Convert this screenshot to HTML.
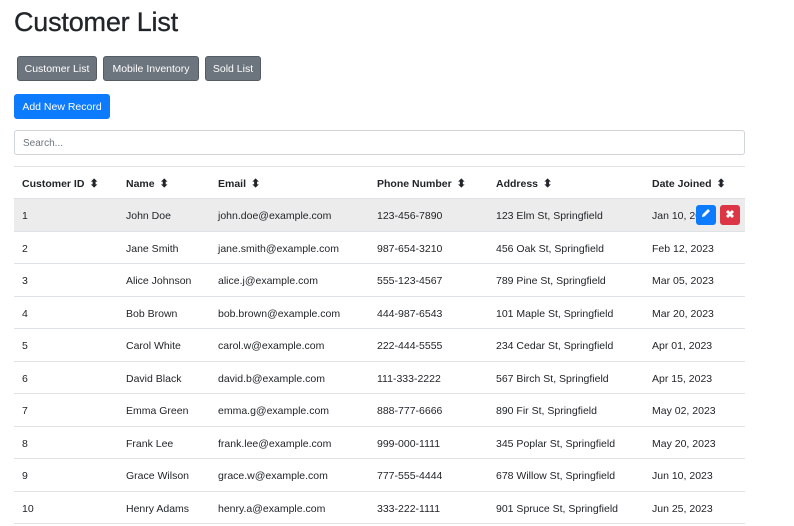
<!DOCTYPE html>
<html><head><style>
*{box-sizing:border-box;margin:0;padding:0}
body{width:794px;height:520px;overflow:hidden;background:#fff;font-family:"Liberation Sans",sans-serif;color:#212529;position:relative}
h1{position:absolute;left:14px;top:7px;font-size:27px;font-weight:500;letter-spacing:-0.2px;-webkit-text-stroke:0.3px #212529}
.b{position:absolute;background:#6c757d;color:#fff;font-size:10.5px;border:1px solid #555c63;border-radius:3px;text-align:center;line-height:25px;height:25px}
.add{position:absolute;left:14px;top:94px;width:96px;height:25px;background:#0d7bfd;color:#fff;font-size:10.5px;border-radius:3px;text-align:center;line-height:27px}
.s{position:absolute;left:14px;top:130px;width:731px;height:25px;border:1px solid #ced4da;border-radius:3px;font-size:10px;color:#6c757d;padding-left:8px;line-height:25px}
.hl{position:absolute;left:14px;width:731px;height:1px;background:#dee2e6}
.r{position:absolute;left:14px;width:731px;height:32.5px;font-size:10.5px;border-bottom:1px solid #dee2e6}
.r span{position:absolute;top:0;line-height:34px;white-space:nowrap}
.h{font-weight:bold;font-size:10.5px}
.h span::after{content:"\2B0D";font-size:11px;margin-left:5px}
.btn{position:absolute;top:6px;width:20px;height:20px;border-radius:3px;color:#fff;font-size:11px;text-align:center;line-height:20px;font-weight:bold}
</style></head><body>
<h1>Customer List</h1>
<div class="b" style="left:17px;top:56px;width:80px">Customer List</div>
<div class="b" style="left:103px;top:56px;width:96px">Mobile Inventory</div>
<div class="b" style="left:205px;top:56px;width:56px">Sold List</div>
<div class="add">Add New Record</div>
<div class="s">Search...</div>
<div class="hl" style="top:166px"></div>
<div class="r h" style="top:167px;height:32px"><span style="left:8px">Customer ID</span><span style="left:112px">Name</span><span style="left:204px">Email</span><span style="left:363px">Phone Number</span><span style="left:482px">Address</span><span style="left:638px">Date Joined</span></div>
<div class="r" style="top:199px;background:#ececec"><span style="left:8px">1</span><span style="left:112px">John Doe</span><span style="left:204px">john.doe@example.com</span><span style="left:363px">123-456-7890</span><span style="left:482px">123 Elm St, Springfield</span><span style="left:638px">Jan 10, 2023</span>
<div class="btn" style="left:682px;background:#0d7bfd"><svg width="10" height="10" viewBox="0 0 10 10"><path d="M1 9l.5-2.5L7 1l2 2-5.5 5.5z" fill="#fff"/></svg></div>
<div class="btn" style="left:706px;background:#dc3545">✖</div></div>
<div class="r" style="top:231.5px"><span style="left:8px">2</span><span style="left:112px">Jane Smith</span><span style="left:204px">jane.smith@example.com</span><span style="left:363px">987-654-3210</span><span style="left:482px">456 Oak St, Springfield</span><span style="left:638px">Feb 12, 2023</span></div>
<div class="r" style="top:264px"><span style="left:8px">3</span><span style="left:112px">Alice Johnson</span><span style="left:204px">alice.j@example.com</span><span style="left:363px">555-123-4567</span><span style="left:482px">789 Pine St, Springfield</span><span style="left:638px">Mar 05, 2023</span></div>
<div class="r" style="top:296.5px"><span style="left:8px">4</span><span style="left:112px">Bob Brown</span><span style="left:204px">bob.brown@example.com</span><span style="left:363px">444-987-6543</span><span style="left:482px">101 Maple St, Springfield</span><span style="left:638px">Mar 20, 2023</span></div>
<div class="r" style="top:329px"><span style="left:8px">5</span><span style="left:112px">Carol White</span><span style="left:204px">carol.w@example.com</span><span style="left:363px">222-444-5555</span><span style="left:482px">234 Cedar St, Springfield</span><span style="left:638px">Apr 01, 2023</span></div>
<div class="r" style="top:361.5px"><span style="left:8px">6</span><span style="left:112px">David Black</span><span style="left:204px">david.b@example.com</span><span style="left:363px">111-333-2222</span><span style="left:482px">567 Birch St, Springfield</span><span style="left:638px">Apr 15, 2023</span></div>
<div class="r" style="top:394px"><span style="left:8px">7</span><span style="left:112px">Emma Green</span><span style="left:204px">emma.g@example.com</span><span style="left:363px">888-777-6666</span><span style="left:482px">890 Fir St, Springfield</span><span style="left:638px">May 02, 2023</span></div>
<div class="r" style="top:426.5px"><span style="left:8px">8</span><span style="left:112px">Frank Lee</span><span style="left:204px">frank.lee@example.com</span><span style="left:363px">999-000-1111</span><span style="left:482px">345 Poplar St, Springfield</span><span style="left:638px">May 20, 2023</span></div>
<div class="r" style="top:459px"><span style="left:8px">9</span><span style="left:112px">Grace Wilson</span><span style="left:204px">grace.w@example.com</span><span style="left:363px">777-555-4444</span><span style="left:482px">678 Willow St, Springfield</span><span style="left:638px">Jun 10, 2023</span></div>
<div class="r" style="top:491.5px"><span style="left:8px">10</span><span style="left:112px">Henry Adams</span><span style="left:204px">henry.a@example.com</span><span style="left:363px">333-222-1111</span><span style="left:482px">901 Spruce St, Springfield</span><span style="left:638px">Jun 25, 2023</span></div>
</body></html>
